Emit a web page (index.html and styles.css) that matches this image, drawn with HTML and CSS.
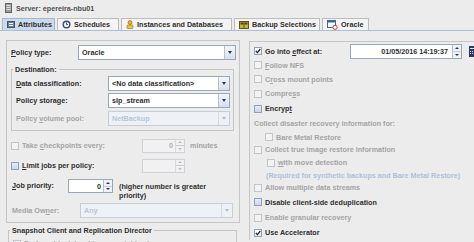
FILE: index.html
```html
<!DOCTYPE html>
<html>
<head>
    <title>Policy Attributes</title>
    <link rel="stylesheet" href="styles.css">
</head>
<body>
<div class="window">
    <div class="title">
        <svg class="ico-server" width="7" height="10" viewBox="0 0 7 10">
            <rect x="0.5" y="0.5" width="6" height="9" fill="#9a9a9a" stroke="#666"/>
            <rect x="1.5" y="2" width="4" height="1" fill="#e0e0e0"/>
            <rect x="1.5" y="4" width="4" height="1" fill="#e0e0e0"/>
            <rect x="1.5" y="6" width="4" height="1" fill="#e0e0e0"/>
        </svg>
        <span>Server: epereira-nbu01</span>
    </div>

    <div class="tabs">
        <div class="tab active t-attr">
            <svg width="8" height="7" viewBox="0 0 8 7">
                <rect x="0.5" y="0.5" width="7" height="6" fill="#6f84a3" stroke="#3d4f6b"/>
                <rect x="2" y="2" width="4" height="1" fill="#fff"/>
                <rect x="2" y="4" width="4" height="1" fill="#fff"/>
            </svg>
            Attributes
        </div>
        <div class="tab t-sched">
            <svg width="9" height="9" viewBox="0 0 9 9">
                <circle cx="4.5" cy="4.5" r="4" fill="#3b4d75"/>
                <circle cx="4.5" cy="4.5" r="2.6" fill="#e8eef6"/>
                <path d="M4.5 2.5 V4.5 H6" stroke="#3b4d75" stroke-width="0.9" fill="none"/>
            </svg>
            Schedules
        </div>
        <div class="tab t-inst">
            <svg width="8" height="9" viewBox="0 0 8 9">
                <circle cx="4" cy="2.5" r="2" fill="#e6b422" stroke="#8a6510" stroke-width="0.6"/>
                <rect x="1" y="5" width="6" height="3.5" rx="1" fill="#f0c63a" stroke="#8a6510" stroke-width="0.6"/>
            </svg>
            Instances and Databases
        </div>
        <div class="tab t-back">
            <svg width="10" height="8" viewBox="0 0 10 8">
                <rect x="0.5" y="0.5" width="9" height="7" fill="#c9b636" stroke="#5e5418"/>
                <rect x="1.5" y="1.5" width="3" height="2" fill="#4b4315"/>
                <rect x="5.5" y="1.5" width="3" height="2" fill="#4b4315"/>
                <line x1="5" y1="0.5" x2="5" y2="7.5" stroke="#5e5418"/>
            </svg>
            Backup Selections
        </div>
        <div class="tab t-ora">
            <svg width="11" height="10" viewBox="0 0 11 10">
                <rect x="0.5" y="0.5" width="8" height="7" fill="#fff" stroke="#3a66a8"/>
                <rect x="0.5" y="0.5" width="8" height="2" fill="#3a66a8"/>
                <circle cx="8" cy="7.3" r="2.1" fill="#fff" stroke="#d2342c" stroke-width="1"/>
            </svg>
            Oracle
        </div>
    </div>

    <div class="main">
        <div class="left">
            <div class="panel">
                <div class="row r-type">
                    <span class="lbl"><u>P</u>olicy type:</span>
                    <div class="combo">Oracle<span class="arrow"></span></div>
                </div>

                <fieldset class="group dest">
                    <legend>Destination:</legend>
                    <div class="row r-dest">
                        <span class="lbl"><u>D</u>ata classification:</span>
                        <div class="combo">&lt;No data classification&gt;<span class="arrow"></span></div>
                    </div>
                    <div class="row r-dest">
                        <span class="lbl">Policy storage:</span>
                        <div class="combo">slp_stream<span class="arrow"></span></div>
                    </div>
                    <div class="row r-dest">
                        <span class="lbl off">Policy <u>v</u>olume pool:</span>
                        <div class="combo dis">NetBackup<span class="arrow"></span></div>
                    </div>
                </fieldset>

                <div class="row r-ck">
                    <span class="chk"><span class="cb off"></span><span class="lbl off">Take <u>c</u>heckpoints every:</span></span>
                    <div class="spin dis"><span class="val">0</span><span class="btns"><i class="up"></i><i class="dn"></i></span></div>
                    <span class="lbl off unit">minutes</span>
                </div>

                <div class="row r-limit">
                    <span class="chk"><span class="cb"></span><span class="lbl"><u>L</u>imit jobs per policy:</span></span>
                    <div class="spin dis"><span class="val"></span><span class="btns"><i class="up"></i><i class="dn"></i></span></div>
                </div>

                <div class="row r-job">
                    <span class="lbl"><u>J</u>ob priority:</span>
                    <div class="spin"><span class="val">0</span><span class="btns"><i class="up"></i><i class="dn"></i></span></div>
                    <span class="note">(higher number is greater<br>priority)</span>
                </div>

                <div class="row r-media">
                    <span class="lbl off">Media Ow<u>n</u>er:</span>
                    <div class="combo dis">Any<span class="arrow"></span></div>
                </div>
            </div>

            <fieldset class="group snap">
                <legend>Snapshot Client and Replication Director</legend>
                <div class="opt snap-row"><span class="cb off"></span><span class="lbl off">Perform block level incremental backups</span></div>
            </fieldset>
        </div>

        <div class="right">
            <div class="opt o1">
                <span class="cb on"><svg width="6" height="6" viewBox="0 0 6 6"><path d="M0.8 3 L2.4 4.6 L5.3 1" stroke="#222" stroke-width="1.2" fill="none"/></svg></span>
                <span class="lbl go">Go into <u>e</u>ffect at:</span>
                <div class="date"><span class="val">01/05/2016 14:19:37</span><span class="btns"><i class="up"></i><i class="dn"></i></span></div>
                <svg class="cal" width="7" height="11" viewBox="0 0 7 11">
                    <rect x="0" y="0" width="7" height="11" fill="#27386a"/>
                    <rect x="1" y="2" width="5" height="1" fill="#dfe6f3"/>
                    <rect x="1" y="5" width="1" height="1" fill="#dfe6f3"/>
                    <rect x="3" y="5" width="1" height="1" fill="#dfe6f3"/>
                    <rect x="5" y="5" width="1" height="1" fill="#dfe6f3"/>
                    <rect x="1" y="7" width="1" height="1" fill="#dfe6f3"/>
                    <rect x="3" y="7" width="1" height="1" fill="#dfe6f3"/>
                    <rect x="5" y="7" width="1" height="1" fill="#dfe6f3"/>
                </svg>
            </div>
            <div class="opt o2"><span class="cb off"></span><span class="lbl off"><u>F</u>ollow NFS</span></div>
            <div class="opt o3"><span class="cb off"></span><span class="lbl off">C<u>r</u>oss mount points</span></div>
            <div class="opt o4"><span class="cb off"></span><span class="lbl off">Compre<u>s</u>s</span></div>
            <div class="opt o5"><span class="cb"></span><span class="lbl">Encryp<u>t</u></span></div>
            <div class="opt o6"><span class="lbl off">Collect disaster recovery information for:</span></div>
            <div class="opt o7"><span class="cb off"></span><span class="lbl off">Bare Metal Restore</span></div>
            <div class="opt o8"><span class="cb off"></span><span class="lbl off">Collect true image restore information</span></div>
            <div class="opt o9"><span class="cb off"></span><span class="lbl off"><u>w</u>ith move detection</span></div>
            <div class="opt o10"><span class="req">(Required for synthetic backups and Bare Metal Restore)</span></div>
            <div class="opt o11"><span class="cb off"></span><span class="lbl off">Allow multiple data streams</span></div>
            <div class="opt o12"><span class="cb"></span><span class="lbl">Disable client-side deduplication</span></div>
            <div class="opt o13"><span class="cb off"></span><span class="lbl off">Enable granular recovery</span></div>
            <div class="opt o14">
                <span class="cb on"><svg width="6" height="6" viewBox="0 0 6 6"><path d="M0.8 3 L2.4 4.6 L5.3 1" stroke="#222" stroke-width="1.2" fill="none"/></svg></span>
                <span class="lbl">Use Accelerator</span>
            </div>
        </div>
    </div>
</div>
</body>
</html>
```

FILE: styles.css
```css
body {
    margin: 0;
    background: #ececec;
}
.window {
    width: 474px;
    height: 242px;
    overflow: hidden;
    font-family: "Liberation Sans", Arial, sans-serif;
    font-weight: bold;
    font-size: 7.2px;
    color: #2e2e2e;
    background: #ececec;
}
u {
    text-decoration-thickness: 1px;
    text-underline-offset: 1px;
}

/* title + tabs */
.title {
    height: 16px;
    display: flex;
    align-items: center;
    gap: 4px;
    padding-left: 5px;
    color: #505050;
}
.tabs {
    display: flex;
    height: 12px;
    margin-top: 2px;
    padding-left: 2px;
    border-bottom: 1px solid #a9bdd3;
}
.tab {
    display: flex;
    align-items: center;
    gap: 3px;
    box-sizing: border-box;
    padding-left: 4px;
    border: 1px solid #bcbcbc;
    border-bottom: none;
    background: #f4f4f4;
    margin-right: 2px;
    color: #2e2e2e;
}
.tab.active {
    background: #ccdbec;
    border-color: #a3b8cf;
}
.t-attr { width: 53px; }
.t-sched { width: 62px; }
.t-inst { width: 111px; }
.t-back { width: 86px; }
.t-ora { width: 47px; }

/* layout */
.main {
    display: flex;
    align-items: flex-start;
    padding-top: 9px;
}
.left {
    margin-left: 6px;
    width: 234px;
}
.panel {
    box-sizing: border-box;
    width: 234px;
    border: 1px solid #c6c6c6;
    padding: 4px 3px 4.5px 4px;
}
.row {
    display: grid;
    align-items: center;
}
.lbl { white-space: nowrap; }
.off { color: #a4a4a4; }

.r-type {
    grid-template-columns: 67px 158px;
    height: 15px;
}
.group {
    margin: 0;
    min-width: 0;
    box-sizing: border-box;
    border: 1px solid #c6c6c6;
}
.group legend {
    padding: 0 2px;
    margin-left: -3px;
    line-height: 9px;
}
.dest {
    width: 223px;
    margin-top: 4.5px;
    padding: 2px 3px 4.5px 4px;
}
.r-dest {
    grid-template-columns: 92px 122px;
    height: 15px;
}
.r-dest + .r-dest { margin-top: 2.5px; }

.r-ck, .r-limit {
    grid-template-columns: 131px 43px auto;
    height: 14px;
}
.r-ck { margin-top: 7.5px; }
.r-limit { margin-top: 6px; }
.chk {
    display: flex;
    align-items: center;
    gap: 3px;
}
.unit { margin-left: 5px; }

.r-job {
    grid-template-columns: 56px 45px auto;
    align-items: start;
    margin-top: 6.5px;
    padding-left: 1px;
}
.r-job .lbl { line-height: 14px; }
.note {
    margin-left: 6px;
    margin-top: 2.5px;
    line-height: 9px;
}
.r-media {
    grid-template-columns: 68px 153px;
    height: 15px;
    margin-top: 3px;
    padding-left: 1px;
}

.snap {
    width: 229px;
    margin-top: 2.5px;
    margin-left: 2px;
    padding: 3px 3px 4px 4px;
}
.snap-row {
    height: 12px;
}

/* controls */
.combo {
    box-sizing: border-box;
    height: 100%;
    display: flex;
    align-items: center;
    padding-left: 3px;
    border: 1px solid #9aa7b6;
    background: #fff;
    white-space: nowrap;
    overflow: hidden;
}
.arrow {
    margin-left: auto;
    flex: none;
    width: 11px;
    height: 100%;
    box-sizing: border-box;
    border-left: 1px solid #b4c1cf;
    background: linear-gradient(#f3f6fa, #d6e0eb);
    display: flex;
    align-items: center;
    justify-content: center;
}
.arrow::after {
    content: "";
    border-left: 2.5px solid transparent;
    border-right: 2.5px solid transparent;
    border-top: 3px solid #2e3a4c;
}
.combo.dis {
    background: #eef2f6;
    border-color: #c7ced8;
    color: #b6c6d9;
}
.combo.dis .arrow {
    border-left-color: #d3dae3;
    background: #edf1f5;
}
.combo.dis .arrow::after { border-top-color: #b3bcc8; }

.spin, .date {
    box-sizing: border-box;
    height: 14px;
    display: flex;
    border: 1px solid #9aa7b6;
    background: #fff;
}
.spin .val, .date .val {
    flex: 1;
    text-align: right;
    padding-right: 2px;
    align-self: center;
}
.btns {
    flex: none;
    width: 8px;
    display: flex;
    flex-direction: column;
    border-left: 1px solid #b4c1cf;
    background: #eef2f7;
}
.btns i {
    flex: 1;
    display: flex;
    align-items: center;
    justify-content: center;
}
.btns i + i { border-top: 1px solid #c3cdd8; }
.btns .up::after {
    content: "";
    border-left: 2px solid transparent;
    border-right: 2px solid transparent;
    border-bottom: 2px solid #2e3a4c;
}
.btns .dn::after {
    content: "";
    border-left: 2px solid transparent;
    border-right: 2px solid transparent;
    border-top: 2px solid #2e3a4c;
}
.spin.dis {
    border-color: #cfd3d8;
    background: #f1f1f1;
    color: #b0b0b0;
}
.spin.dis .btns {
    border-left-color: #d6d9dd;
    background: #f1f1f1;
}
.spin.dis .btns i::after { border-top-color: #bbb; border-bottom-color: #bbb; }
.spin.dis .btns .up::after { border-top-color: transparent; }
.spin.dis .btns .dn::after { border-bottom-color: transparent; }

.cb {
    flex: none;
    box-sizing: border-box;
    width: 8px;
    height: 8px;
    border: 1px solid #8ea1b8;
    background: linear-gradient(#e6edf5, #c9d7e6);
    display: flex;
    align-items: center;
    justify-content: center;
}
.cb.on {
    background: linear-gradient(#ffffff, #e3eaf2);
}
.cb.off {
    border-color: #c2c6cc;
    background: #f3f3f3;
}

/* right column */
.right {
    box-sizing: border-box;
    width: 240px;
    margin-left: 9px;
    margin-top: 1px;
    border-left: 1px solid #c6c6c6;
    border-top: 1px solid #c6c6c6;
    padding: 2px 0 0 4px;
}
.opt {
    display: flex;
    align-items: center;
    gap: 3px;
    white-space: nowrap;
}
.go { width: 82px; }
.date {
    width: 112px;
    height: 15px;
}
.date .val { padding-right: 4px; }
.date .btns { width: 8px; }
.cal { margin-left: 4px; }
.req { color: #adc1d9; }

.o1 { height: 14px; }
.o2, .o3 { height: 14px; }
.o4, .o5, .o6 { height: 15px; }
.o7 { height: 12px; padding-left: 11px; }
.o8 { height: 13px; }
.o9 { height: 13px; padding-left: 13px; }
.o10 { height: 12px; padding-left: 12px; }
.o11 { height: 13px; }
.o12 { height: 16px; }
.o13, .o14 { height: 15px; }
```
